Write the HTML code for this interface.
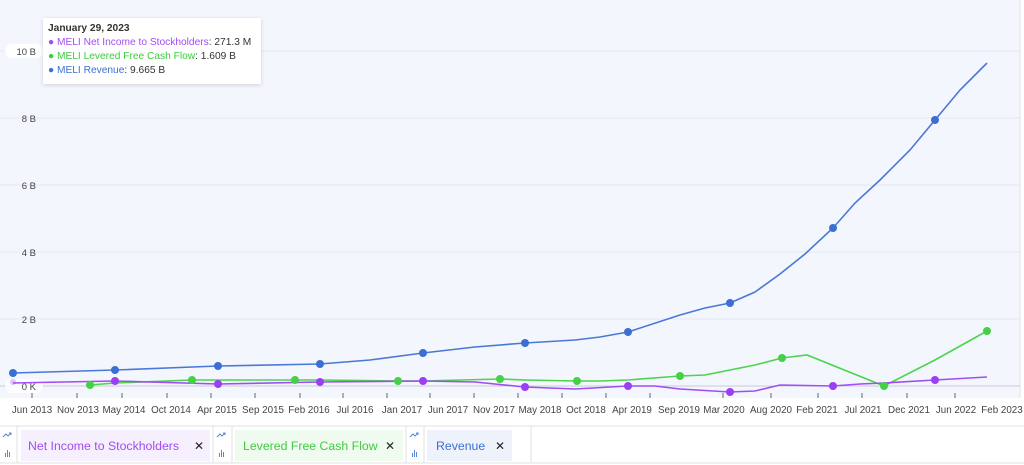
<!DOCTYPE html>
<html><head><meta charset="utf-8"><style>
body{margin:0;width:1024px;height:465px;background:#fff;font-family:"Liberation Sans",sans-serif;overflow:hidden;position:relative}
.tt{position:absolute;left:43px;top:18px;width:218px;height:66px;background:#fff;box-shadow:0 1px 4px rgba(0,0,0,.15);font-size:10.2px;line-height:14px;padding:4px 5px;box-sizing:border-box;color:#333;white-space:nowrap}
</style></head><body>
<svg width="1024" height="465" style="position:absolute;left:0;top:0" font-family="Liberation Sans" font-size="9.5">
<rect x="0" y="0" width="1020" height="398" fill="#f3f6fd"/>
<line x1="1020" y1="0" x2="1020" y2="398" stroke="#dde2ec"/>
<g stroke="#e4e8f1">
<line x1="0" y1="51" x2="1020" y2="51"/><line x1="0" y1="118" x2="1020" y2="118"/><line x1="0" y1="185" x2="1020" y2="185"/><line x1="0" y1="252" x2="1020" y2="252"/><line x1="0" y1="319" x2="1020" y2="319"/>
</g>
<line x1="0" y1="386" x2="1020" y2="386" stroke="#c8ccd6"/>
<g fill="#444" text-anchor="end">
<rect x="5" y="44" width="38" height="14" rx="7" fill="#fff"/>
<text x="36" y="55">10 B</text><text x="36" y="122">8 B</text><text x="36" y="189">6 B</text><text x="36" y="256">4 B</text><text x="36" y="323">2 B</text>
<rect x="5" y="379" width="38" height="14" rx="7" fill="#fff" opacity=".8"/>
<text x="36" y="390">0 K</text>
</g>
<polyline fill="none" stroke="#4a78d6" stroke-width="1.6" points="13,373 115,370 218,366 320,364 370,360 423,353 475,347 525,343 575,340 600,337 628,332 680,315 705,308 730,303 755,292 780,274 805,254 833,228 855,203 880,180 910,150 935,120 960,90 987,63"/>
<polyline fill="none" stroke="#4cd44c" stroke-width="1.6" points="90,385 115,383 192,380 218,380 295,380 320,380 398,381 423,381 500,379 525,380 577,381 600,381 628,380 680,376 705,375 755,365 782,358 807,355 884,386 935,360 987,331"/>
<polyline fill="none" stroke="#a24cf5" stroke-width="1.6" points="13,383 115,381 218,384 320,382 423,381 475,382 525,387 575,389 628,386 655,386 680,389 730,392 755,391 780,385 833,386 860,384 884,383 935,380 987,377"/>
<g fill="#3d6fd3"><circle cx="13" cy="373" r="4"/><circle cx="115" cy="370" r="4"/><circle cx="218" cy="366" r="4"/><circle cx="320" cy="364" r="4"/><circle cx="423" cy="353" r="4"/><circle cx="525" cy="343" r="4"/><circle cx="628" cy="332" r="4"/><circle cx="730" cy="303" r="4"/><circle cx="833" cy="228" r="4"/><circle cx="935" cy="120" r="4"/></g>
<g fill="#46d046"><circle cx="90" cy="385" r="4"/><circle cx="192" cy="380" r="4"/><circle cx="295" cy="380" r="4"/><circle cx="398" cy="381" r="4"/><circle cx="500" cy="379" r="4"/><circle cx="577" cy="381" r="4"/><circle cx="680" cy="376" r="4"/><circle cx="782" cy="358" r="4"/><circle cx="884" cy="386" r="4"/><circle cx="987" cy="331" r="4"/></g>
<g fill="#9b3ff2"><circle cx="13" cy="382" r="3" opacity=".3"/><circle cx="115" cy="381" r="4"/><circle cx="218" cy="384" r="4"/><circle cx="320" cy="382" r="4"/><circle cx="423" cy="381" r="4"/><circle cx="525" cy="387" r="4"/><circle cx="628" cy="386" r="4"/><circle cx="730" cy="392" r="4"/><circle cx="833" cy="386" r="4"/><circle cx="935" cy="380" r="4"/></g>
<rect x="0" y="398" width="1024" height="29" fill="#fff"/>
<g stroke="#666" stroke-width="1">
<line x1="32" y1="393" x2="32" y2="398"/><line x1="77" y1="393" x2="77" y2="398"/><line x1="122" y1="393" x2="122" y2="398"/><line x1="167" y1="393" x2="167" y2="398"/><line x1="211" y1="393" x2="211" y2="398"/><line x1="255" y1="393" x2="255" y2="398"/><line x1="300" y1="393" x2="300" y2="398"/><line x1="343" y1="393" x2="343" y2="398"/><line x1="387" y1="393" x2="387" y2="398"/><line x1="430" y1="393" x2="430" y2="398"/><line x1="474" y1="393" x2="474" y2="398"/><line x1="518" y1="393" x2="518" y2="398"/><line x1="562" y1="393" x2="562" y2="398"/><line x1="606" y1="393" x2="606" y2="398"/><line x1="650" y1="393" x2="650" y2="398"/><line x1="723" y1="393" x2="723" y2="398"/><line x1="771" y1="393" x2="771" y2="398"/><line x1="818" y1="393" x2="818" y2="398"/><line x1="862" y1="393" x2="862" y2="398"/><line x1="907" y1="393" x2="907" y2="398"/><line x1="955" y1="393" x2="955" y2="398"/>
</g>
<g fill="#444" text-anchor="middle" font-size="9.8">
<text x="32" y="413">Jun 2013</text><text x="78" y="413">Nov 2013</text><text x="124" y="413">May 2014</text><text x="171" y="413">Oct 2014</text><text x="217" y="413">Apr 2015</text><text x="263" y="413">Sep 2015</text><text x="309" y="413">Feb 2016</text><text x="355" y="413">Jul 2016</text><text x="402" y="413">Jan 2017</text><text x="448" y="413">Jun 2017</text><text x="494" y="413">Nov 2017</text><text x="540" y="413">May 2018</text><text x="586" y="413">Oct 2018</text><text x="632" y="413">Apr 2019</text><text x="679" y="413">Sep 2019</text><text x="724" y="413">Mar 2020</text><text x="771" y="413">Aug 2020</text><text x="817" y="413">Feb 2021</text><text x="863" y="413">Jul 2021</text><text x="909" y="413">Dec 2021</text><text x="956" y="413">Jun 2022</text><text x="1002" y="413">Feb 2023</text>
</g>
<line x1="0" y1="426" x2="1024" y2="426" stroke="#e2e2e2"/>
<line x1="0" y1="463" x2="1024" y2="463" stroke="#e2e2e2"/>
<g stroke="#e2e2e2"><line x1="17" y1="426" x2="17" y2="463"/><line x1="213" y1="426" x2="213" y2="463"/><line x1="232" y1="426" x2="232" y2="463"/><line x1="406" y1="426" x2="406" y2="463"/><line x1="424" y1="426" x2="424" y2="463"/><line x1="531" y1="426" x2="531" y2="463"/></g>
<g fill="none" stroke="#5a86d8" stroke-width="1">
<path d="M3 437 l3 -3 2 2 3 -3 M9 433 h2 v2"/><path d="M217 437 l3 -3 2 2 3 -3 M223 433 h2 v2"/><path d="M410 437 l3 -3 2 2 3 -3 M416 433 h2 v2"/>
</g>
<g fill="#5a86d8"><rect x="5" y="453" width="1" height="4"/><rect x="7" y="450" width="1" height="7"/><rect x="9" y="452" width="1" height="5"/>
<rect x="219" y="453" width="1" height="4"/><rect x="221" y="450" width="1" height="7"/><rect x="223" y="452" width="1" height="5"/>
<rect x="412" y="453" width="1" height="4"/><rect x="414" y="450" width="1" height="7"/><rect x="416" y="452" width="1" height="5"/></g>
<rect x="21" y="430" width="189" height="31" fill="#f6effd"/>
<rect x="235" y="430" width="168" height="31" fill="#effbef"/>
<rect x="427" y="430" width="85" height="31" fill="#eef2fb"/>
<g font-size="12.3"><text x="28" y="450" fill="#a24cf5">Net Income to Stockholders</text><text x="243" y="450" fill="#44c844">Levered Free Cash Flow</text><text x="436" y="450" fill="#3d6fd3">Revenue</text>
<text x="194" y="450" fill="#222" font-size="12">✕</text><text x="385" y="450" fill="#222" font-size="12">✕</text><text x="495" y="450" fill="#222" font-size="12">✕</text></g>
</svg>
<div class="tt"><b>January 29, 2023</b><br>
<span style="color:#a24cf5">● MELI Net Income to Stockholders</span>: 271.3 M<br>
<span style="color:#3ccc3c">● MELI Levered Free Cash Flow</span>: 1.609 B<br>
<span style="color:#3d6fd3">● MELI Revenue</span>: 9.665 B</div>
</body></html>
